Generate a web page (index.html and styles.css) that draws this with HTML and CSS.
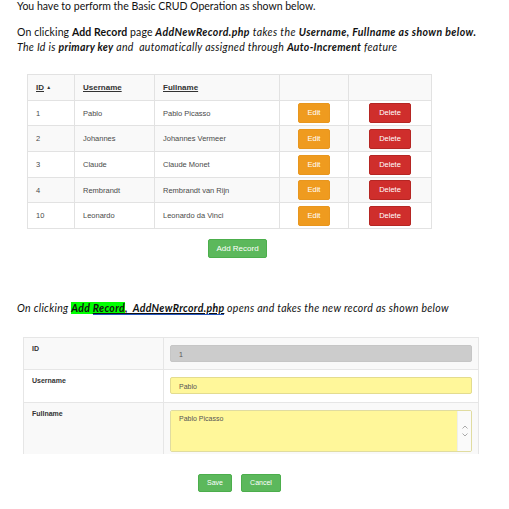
FILE: index.html
```html
<!DOCTYPE html>
<html>
<head>
<meta charset="utf-8">
<link rel="stylesheet" href="styles.css">
</head>
<body>
<div class="doc">
  <p class="line l1">You have to perform the Basic CRUD Operation as shown below.</p>
  <p class="line l2">On clicking <b>Add Record</b> page <b><i>AddNewRecord.php</i></b> <i>takes the <b>Username, Fullname as shown below.</b></i></p>
  <p class="line l3"><i>The Id is <b>primary key</b> and &nbsp;automatically assigned through <b>Auto-Increment</b> feature</i></p>

  <table class="grid">
    <tr class="head">
      <th class="c-id"><span class="sort">ID</span> <span class="tri">&#9650;</span></th>
      <th class="c-user"><span class="sort">Username</span></th>
      <th class="c-full"><span class="sort">Fullname</span></th>
      <th class="c-edit"></th>
      <th class="c-del"></th>
    </tr>
    <tr class="r25"><td>1</td><td>Pablo</td><td>Pablo Picasso</td><td class="ctr"><span class="btn edit">Edit</span></td><td class="ctr"><span class="btn del">Delete</span></td></tr>
    <tr class="alt r26"><td>2</td><td>Johannes</td><td>Johannes Vermeer</td><td class="ctr"><span class="btn edit">Edit</span></td><td class="ctr"><span class="btn del">Delete</span></td></tr>
    <tr class="r26"><td>3</td><td>Claude</td><td>Claude Monet</td><td class="ctr"><span class="btn edit">Edit</span></td><td class="ctr"><span class="btn del">Delete</span></td></tr>
    <tr class="alt r25"><td>4</td><td>Rembrandt</td><td>Rembrandt van Rijn</td><td class="ctr"><span class="btn edit">Edit</span></td><td class="ctr"><span class="btn del">Delete</span></td></tr>
    <tr class="r26"><td>10</td><td>Leonardo</td><td>Leonardo da Vinci</td><td class="ctr"><span class="btn edit">Edit</span></td><td class="ctr"><span class="btn del">Delete</span></td></tr>
  </table>

  <div class="addrow"><span class="btn add">Add Record</span></div>

  <p class="line l4"><i>On clicking <b class="hl">Add <u>Record</u></b><b class="lnk"><u>,&nbsp; AddNewRrcord.php</u></b> opens and takes the new record as shown below</i></p>

  <div class="form">
    <div class="frow alt h32">
      <div class="flabel">ID</div>
      <div class="fctl"><div class="input ro">1</div></div>
    </div>
    <div class="frow h33">
      <div class="flabel">Username</div>
      <div class="fctl"><div class="input yl">Pablo</div></div>
    </div>
    <div class="frow alt h52">
      <div class="flabel">Fullname</div>
      <div class="fctl">
        <div class="area">
          <div class="area-text">Pablo Picasso</div>
          <div class="scroll">
            <svg width="8" height="14" viewBox="0 0 8 14"><path d="M1.5 4.5 L4 2 L6.5 4.5" fill="none" stroke="#aaa" stroke-width="1"/><path d="M1.5 9.5 L4 12 L6.5 9.5" fill="none" stroke="#aaa" stroke-width="1"/></svg>
          </div>
        </div>
      </div>
    </div>
  </div>

  <div class="actions">
    <span class="btn add sm save">Save</span>
    <span class="btn add sm cancel">Cancel</span>
  </div>
</div>
</body>
</html>
```
FILE: styles.css
```css
html, body {
  margin: 0;
  padding: 0;
  background: #fff;
}
.doc {
  width: 509px;
  height: 509px;
  overflow: hidden;
  font-family: Lato, "Open Sans", sans-serif;
  color: #111;
}
.line {
  margin: 0;
  padding-left: 17px;
  font-size: 10.5px;
  line-height: 12px;
  white-space: nowrap;
}
.line i { letter-spacing: 0.3px; }
.l1 { padding-top: 0; }
.l2 { margin-top: 14px; letter-spacing: 0.1px; }
.l2 i { letter-spacing: 0.4px; }
.l3 { margin-top: 3px; }
.l4 { margin-top: 44px; }

.grid {
  margin-top: 21px;
  margin-left: 27px;
  border-collapse: collapse;
  table-layout: fixed;
  width: 404px;
  font-family: "Liberation Sans", Arial, sans-serif;
  font-size: 7.5px;
  color: #4a4a4a;
}
.grid th, .grid td {
  border: 1px solid #e2e2e2;
  padding: 0 0 0 8px;
  text-align: left;
  vertical-align: middle;
  box-sizing: border-box;
}
.grid th { font-weight: bold; color: #333; font-size: 8px; }
.c-id { width: 47px; }
.c-user { width: 80px; }
.c-full { width: 125px; }
.c-edit { width: 69px; }
.c-del { width: 83px; }
.head { height: 26px; background: #f9f9f9; }
.r25 { height: 25px; }
.r26 { height: 26px; }
.alt { background: #f9f9f9; }
.sort { text-decoration: underline; }
.tri { font-size: 5px; position: relative; top: -1px; }
.grid td.ctr { text-align: center; padding: 0; }

.btn {
  display: inline-block;
  color: #fff;
  font-family: "Liberation Sans", Arial, sans-serif;
  font-size: 7.5px;
  text-align: center;
  border-radius: 2px;
  box-sizing: border-box;
  vertical-align: middle;
}
.edit {
  width: 32px;
  height: 20px;
  background: #ef9b1f;
  border: 1px solid #e8961e;
  line-height: 18px;
}
.del {
  width: 42px;
  height: 20px;
  line-height: 18px;
  background: #cf2e2c;
  border: 1px solid #b52623;
}
.add {
  background: #5cb85c;
  border: 1px solid #4cae4c;
}
.addrow {
  display: flex;
  padding-left: 208px;
  margin-top: 10px;
  height: 19px;
}
.addrow .add {
  width: 59px;
  height: 19px;
  line-height: 17px;
  font-size: 8px;
}

.form {
  margin-top: 23px;
  margin-left: 23px;
  width: 456px;
  height: 117px;
  overflow: hidden;
  border: 1px solid #e6e6e6;
  border-bottom: none;
  box-sizing: border-box;
  font-family: "Liberation Sans", Arial, sans-serif;
  font-size: 7px;
}
.frow {
  display: flex;
  border-bottom: 1px solid #e6e6e6;
  box-sizing: border-box;
}
.h32 { height: 32px; }
.h33 { height: 33px; }
.h52 { height: 53px; border-bottom: none; }
.flabel {
  width: 140px;
  flex: none;
  border-right: 1px solid #e6e6e6;
  box-sizing: border-box;
  padding: 7px 0 0 8px;
  font-weight: bold;
  color: #333;
}
.fctl {
  flex: 1;
  padding: 7px 6px 0 6px;
}
.input {
  height: 17px;
  line-height: 17px;
  border-radius: 2px;
  padding-left: 8px;
  box-sizing: border-box;
  color: #555;
}
.ro { background: #cccccc; border: 1px solid #c6c6c6; }
.yl { background: #fff79a; border: 1px solid #e3dc8f; }
.area {
  display: flex;
  height: 42px;
  border: 1px solid #e0dca0;
  border-radius: 2px;
  box-sizing: border-box;
  overflow: hidden;
}
.area-text {
  flex: 1;
  background: #fff79a;
  padding: 4px 0 0 8px;
  color: #555;
}
.scroll {
  width: 13px;
  background: #fafafa;
  border-left: 1px solid #eee;
  display: flex;
  align-items: center;
  justify-content: center;
}
.actions {
  margin-top: 20px;
  display: flex;
  gap: 9px;
  padding-left: 198px;
}
.sm {
  height: 18px;
  line-height: 16px;
  font-size: 7px;
}
.save { width: 34px; }
.cancel { width: 40px; }
.hl { background: #00ff00; }
.lnk { border-bottom: 1px solid #2456c0; }
.hl u { border-bottom: 1px solid #2456c0; text-decoration: underline; }
```
